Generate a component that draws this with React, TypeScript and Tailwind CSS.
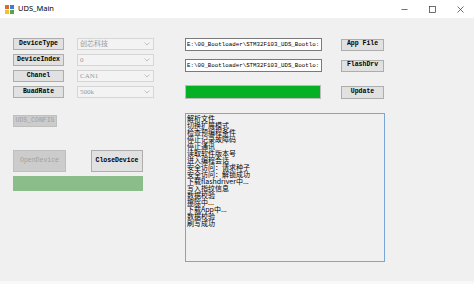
import React from "react";

const mono = { fontFamily: '"Liberation Mono", "DejaVu Sans Mono", monospace' };

function Btn({ label, w, h, disabled = false }: { label: string; w: string; h: string; disabled?: boolean }) {
  return (
    <div
      className={
        (disabled
          ? "bg-[#cccccc] border-[#bfbfbf] text-[#a0a0a0] font-normal "
          : "bg-[#e1e1e1] border-[#adadad] text-black font-bold ") +
        "border flex items-center justify-center shrink-0 text-[6.5px] leading-none " +
        w +
        " " +
        h
      }
      style={mono}
    >
      {label}
    </div>
  );
}

function Combo({ value }: { value: string }) {
  return (
    <div className="w-[77px] h-[12px] bg-[#f3f3f3] border border-[#d6d6d6] flex items-center justify-between pl-[2px] pr-[3px]">
      <span
        className="text-[7px] leading-none text-[#9a9a9a]"
        style={{ fontFamily: '"Liberation Serif", "Noto Sans CJK SC", serif' }}
      >
        {value}
      </span>
      <svg width="6" height="4" viewBox="0 0 6 4">
        <path d="M0.5 0.5 L3 3 L5.5 0.5" fill="none" stroke="#b5b5b5" strokeWidth="0.8" />
      </svg>
    </div>
  );
}

function PathBox({ text }: { text: string }) {
  return (
    <div className="w-[137px] h-[13px] bg-white border border-[#7a7a7a] flex items-center pl-[1px] overflow-hidden shrink-0">
      <span className="text-[5.8px] leading-none text-black whitespace-nowrap" style={mono}>
        {text}
      </span>
    </div>
  );
}

const logLines = [
  "解析文件",
  "切换扩展模式",
  "检查预编程条件",
  "停止记录故障码",
  "停止通讯",
  "读取软件版本号",
  "进入编程会话",
  "安全访问：请求种子",
  "安全访问：解锁成功",
  "下载flashdriver中...",
  "写入指纹信息",
  "数据校验",
  "擦除中...",
  "下载App中...",
  "数据校验",
  "刷写成功",
];

export default function App() {
  return (
    <div className="w-[474px] h-[284px] bg-[#f0f0f0] flex flex-col overflow-hidden">
      {/* Title bar */}
      <div className="h-[18px] bg-white flex items-center shrink-0">
        <svg width="9" height="9" viewBox="0 0 9 9" className="ml-[5px]">
          <rect x="0" y="0" width="4" height="4" fill="#e06a2c" />
          <rect x="5" y="0" width="4" height="4" fill="#3b7dd8" />
          <rect x="0" y="5" width="4" height="4" fill="#f2c12e" />
          <rect x="5" y="5" width="4" height="4" fill="#5aa34a" />
        </svg>
        <span
          className="ml-[4px] text-[7.5px] leading-none text-black"
          style={{ fontFamily: '"Noto Sans", "Open Sans", sans-serif' }}
        >
          UDS_Main
        </span>
        <div className="ml-auto flex items-center gap-[21px] mr-[10px]">
          <svg width="7" height="7" viewBox="0 0 7 7">
            <line x1="0.5" y1="3.5" x2="6.5" y2="3.5" stroke="#333" strokeWidth="0.7" />
          </svg>
          <svg width="7" height="7" viewBox="0 0 7 7">
            <rect x="0.5" y="0.5" width="6" height="6" fill="none" stroke="#333" strokeWidth="0.7" />
          </svg>
          <svg width="7" height="7" viewBox="0 0 7 7">
            <path d="M0.5 0.5 L6.5 6.5 M6.5 0.5 L0.5 6.5" stroke="#333" strokeWidth="0.7" />
          </svg>
        </div>
      </div>

      {/* Body */}
      <div className="flex-1 flex pl-[13px] pt-[20px] gap-[31px]">
        {/* Left column */}
        <div className="w-[141px] flex flex-col">
          <div className="flex flex-col gap-[4px]">
            {[
              ["DeviceType", "创芯科技"],
              ["DeviceIndex", "0"],
              ["Chanel", "CAN1"],
              ["BuadRate", "500k"],
            ].map(([b, v]) => (
              <div key={b} className="flex items-center gap-[13px]">
                <Btn label={b} w="w-[51px]" h="h-[12px]" />
                <Combo value={v} />
              </div>
            ))}
          </div>
          <div className="mt-[17px]">
            <Btn label="UDS_CONFIG" w="w-[44px]" h="h-[12px]" disabled />
          </div>
          <div className="mt-[23px] flex gap-[25px]">
            <Btn label="OpenDevice" w="w-[53px]" h="h-[22px]" disabled />
            <Btn label="CloseDevice" w="w-[52px]" h="h-[22px]" />
          </div>
          <div className="mt-[4px] w-[130px] h-[15px] bg-[#8bbd8b]" />
        </div>

        {/* Right column */}
        <div className="flex flex-col">
          <div className="flex items-center gap-[19px]">
            <PathBox text="E:\00_Bootloader\STM32F103_UDS_Bootlo:" />
            <Btn label="App File" w="w-[43px]" h="h-[12px]" />
          </div>
          <div className="mt-[8px] flex items-center gap-[19px]">
            <PathBox text="E:\00_Bootloader\STM32F103_UDS_Bootlo:" />
            <Btn label="FlashDrv" w="w-[43px]" h="h-[12px]" />
          </div>
          <div className="mt-[13px] flex items-center gap-[20px]">
            <div className="w-[136px] h-[14px] border border-[#bcbcbc] bg-[#e6e6e6] p-0">
              <div className="w-full h-full bg-[#06b025]" />
            </div>
            <Btn label="Update" w="w-[43px]" h="h-[13px]" />
          </div>
          <div className="mt-[14px] w-[200px] h-[149px] border border-[#7aa6d6] bg-[#f0f0f0] pl-[1px] pt-[1px] overflow-hidden">
            {logLines.map((l, i) => (
              <div
                key={i}
                className="text-[7px] leading-[7px] h-[7px] text-black whitespace-nowrap"
                style={{ fontFamily: '"Noto Sans CJK SC", "Liberation Serif", sans-serif' }}
              >
                {l}
              </div>
            ))}
          </div>
        </div>
      </div>
      <div className="h-[3px] bg-[#f8f8f8] shrink-0" />
    </div>
  );
}
